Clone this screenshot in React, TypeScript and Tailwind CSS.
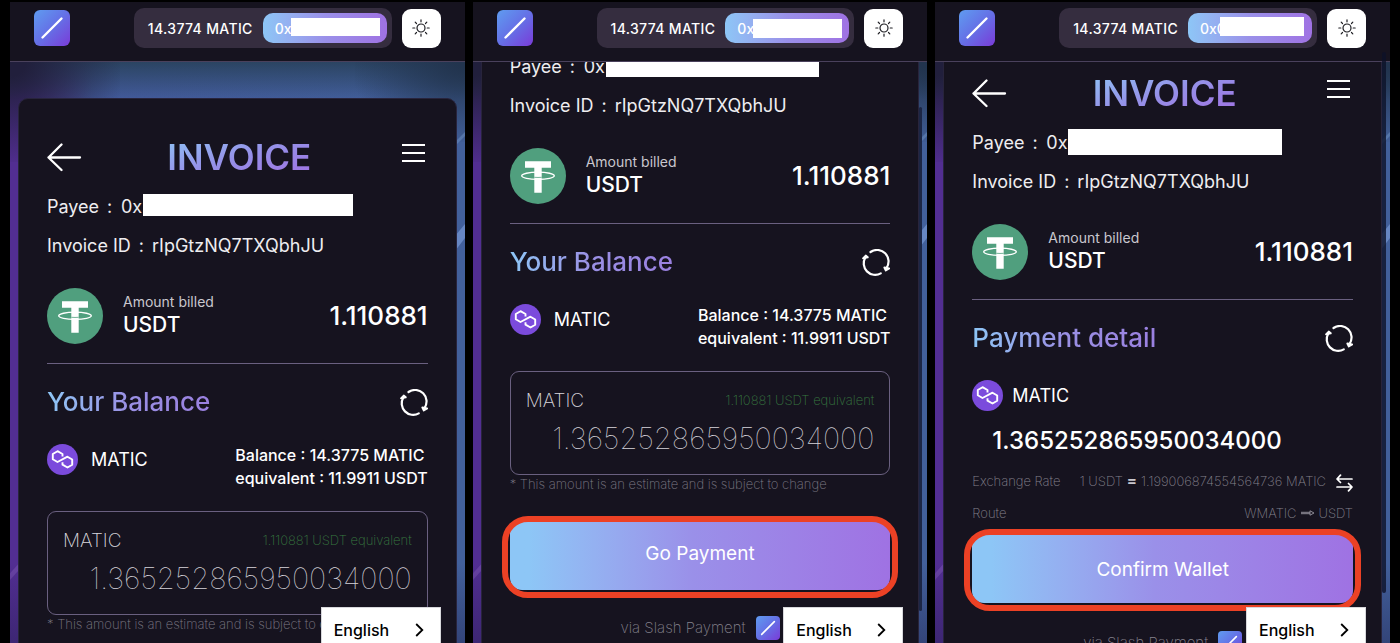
import React from "react";

function SlashLogo({ className }: { className: string }) {
  return (
    <svg viewBox="0 0 36 36" className={className} role="img" aria-label="Slash">
      <defs>
        <linearGradient id="slash-fill" x1="0" y1="0" x2="1" y2="1">
          <stop offset="0" stopColor="#5f9cf0" />
          <stop offset="0.5" stopColor="#6570e6" />
          <stop offset="1" stopColor="#7a3bd8" />
        </linearGradient>
      </defs>
      <rect width="36" height="36" rx="6" fill="url(#slash-fill)" />
      <path d="M8.500 27.500 27.500 8.500" stroke="#fff" strokeWidth="2.400" strokeLinecap="round" />
    </svg>
  );
}

function SunIcon() {
  return (
    <svg viewBox="0 0 18 18" className="size-[18px]" fill="none" stroke="#1f1f24" strokeWidth="1.200" strokeLinecap="round" aria-hidden="true">
      <circle cx="9" cy="9" r="4" />
      <path d="M9 .8v2M9 15.200v2M.8 9h2M15.200 9h2M3.200 3.200l1.300 1.300M13.500 13.500l1.300 1.300M3.200 14.800l1.300-1.300M13.500 4.500l1.300-1.300" />
    </svg>
  );
}

function TetherIcon() {
  return (
    <svg viewBox="0 0 56 56" className="size-14 shrink-0" aria-hidden="true">
      <circle cx="28" cy="28" r="28" fill="#509f7e" />
      <path d="M15 13.300h26v6.500h-9.300v25h-7.400v-25H15z" fill="#fff" />
      <ellipse cx="28" cy="27.800" rx="16.300" ry="3.600" fill="none" stroke="#fff" strokeWidth="1.300" />
      <path d="M24.300 29.300q3.700.300 7.400 0" fill="none" stroke="#509f7e" strokeWidth=".8" />
    </svg>
  );
}

function PolygonIcon() {
  return (
    <svg viewBox="0 0 31 31" className="size-[31px] shrink-0" aria-hidden="true">
      <circle cx="15.500" cy="15.500" r="15.500" fill="#7b4bdc" />
      <path
        d="M15.500 12.500V10l-5-2.800-4.700 2.800v5.200l4.700 2.800 10-5.300 4.700 2.800v5.200l-4.700 2.800-5-2.800v-2.500"
        fill="none"
        stroke="#fff"
        strokeWidth="1.900"
        strokeLinejoin="round"
      />
    </svg>
  );
}

function RefreshIcon() {
  return (
    <svg viewBox="0 0 28 28" className="h-7 w-7" fill="none" stroke="#fff" strokeWidth="2.200" strokeLinecap="round" strokeLinejoin="round" aria-hidden="true">
      <path d="M8.500 3A11.500 11.500 0 0 1 24.500 19" />
      <path d="M3.300 8.500A11.500 11.500 0 0 0 18.800 24.400" />
      <path d="M1 9.300 3.700 6.500 5.800 8.300zM22.300 18.500l1.500 3 3.400-2z" fill="#fff" strokeWidth="1.800" />
    </svg>
  );
}

function SwapIcon() {
  return (
    <svg viewBox="0 0 17 20" className="h-5 w-[17px]" fill="none" stroke="#fff" strokeWidth="1.700" strokeLinecap="round" strokeLinejoin="round" aria-hidden="true">
      <path d="M16 6H1.200M4.500 2.200 1 6l3.500 3.500M1 14h14.800M12.500 10.500l3.500 3.500-3.500 3.800" />
    </svg>
  );
}

function RouteArrow() {
  return (
    <svg viewBox="0 0 14 6" className="mx-1 h-[6px] w-[14px]" fill="none" stroke="#8d8a95" strokeWidth="1" aria-hidden="true">
      <path d="M0 2.300h9M0 3.700h9M9 .800 13 3 9 5.200z" />
    </svg>
  );
}

function Header({ mask, address }: { mask: string; address: string }) {
  return (
    <header className="relative z-10 flex h-[60px] shrink-0 items-center border-b border-[#4a415c] bg-[#16131f] px-6 pb-[7px]">
      <a href="#home" aria-label="Home">
        <SlashLogo className="size-9" />
      </a>
      <div className="ml-auto flex h-10 items-center rounded-[10px] bg-[#352d3f] pl-[14px] pr-[5px]">
        <span className="text-[14px] font-medium tracking-wide text-white">14.3774 MATIC</span>
        <button type="button" className="relative ml-[10px] h-[30px] w-[124px] rounded-[10px] bg-linear-to-r from-[#8dc6f6] via-[#9a90e9] to-[#9f72e3] pl-3 text-left text-[14px] font-medium text-white">
          {address}
          <span className={mask} />
        </button>
      </div>
      <button type="button" aria-label="Light mode" className="ml-[10px] grid size-[39px] place-items-center rounded-[9px] bg-white">
        <SunIcon />
      </button>
    </header>
  );
}

function Backdrop() {
  return (
    <div className="absolute inset-0 bg-linear-to-r from-[#522e92] from-3% via-[#435a9c] via-18% to-[#42609b]">
      <div className="absolute inset-x-0 top-[60px] h-[38px] bg-linear-to-b from-[#2b4462] to-transparent" />
      <div className="absolute top-[60px] left-0 h-[100px] w-[110px] bg-[radial-gradient(ellipse_at_0%_0%,#211f3c_10%,transparent_75%)]" />
      <div className="absolute top-[60px] right-0 h-[80px] w-[110px] bg-[radial-gradient(ellipse_at_100%_0%,#22344e_5%,transparent_75%)]" />
      <svg viewBox="0 0 10 30" className="absolute left-0 top-[558px] h-[20px] w-[9px]" preserveAspectRatio="none" aria-hidden="true">
        <path d="M0 20 10 5v10L0 30z" fill="#7d55b4" opacity=".5" />
      </svg>
      <svg viewBox="0 0 10 120" className="absolute right-0 top-[130px] h-[120px] w-[10px]" preserveAspectRatio="none" aria-hidden="true">
        <path d="M0 10 10 0v4L0 14z" fill="#7ba0cf" opacity=".4" />
        <path d="M0 104 10 92v14L0 119z" fill="#7fa0dc" opacity=".6" />
      </svg>
      <div className="absolute inset-x-0 bottom-0 h-20 bg-linear-to-b from-transparent to-[#1d1b45]/40" />
    </div>
  );
}

function Invoice({ payeeMask }: { payeeMask: string }) {
  return (
    <>
      <div className="flex h-11 items-center justify-between">
        <button type="button" aria-label="Back" className="w-9">
          <svg viewBox="0 0 36 30" className="h-[30px] w-9" fill="none" stroke="#fff" strokeWidth="2.300" strokeLinecap="round" strokeLinejoin="round" aria-hidden="true">
            <path d="M14.500 2.500 1.500 15.500l13 12.500M1.500 15.500H33" />
          </svg>
        </button>
        <h1 className="bg-linear-to-br from-[#8dc6f6] via-[#9590e8] to-[#a070e2] bg-clip-text text-[35px] leading-[44px] font-semibold text-transparent">
          INVOICE
        </h1>
        <button type="button" aria-label="Menu" className="flex h-8 w-8 flex-col items-end gap-[6px] pt-[3px] pr-[3px]">
          <span className="h-[2px] w-[23px] bg-white" />
          <span className="h-[2px] w-[23px] bg-white" />
          <span className="h-[2px] w-[23px] bg-white" />
        </button>
      </div>
      <dl className="mt-2 text-[18px] leading-[39px] text-[#eeedf0]">
        <div className="relative flex">
          <dt className="w-[74px]">
            Payee<span className="ml-2">:</span>
          </dt>
          <dd>0x</dd>
          <span className={payeeMask} />
        </div>
        <div className="flex gap-2">
          <dt>
            Invoice ID<span className="ml-2">:</span>
          </dt>
          <dd>rIpGtzNQ7TXQbhJU</dd>
        </div>
      </dl>
      <div className="mt-[23px] flex h-14 items-center">
        <TetherIcon />
        <div className="ml-5 pb-[2px]">
          <p className="text-[14px] leading-5 text-[#c9c7ce]">Amount billed</p>
          <p className="text-[21px] leading-[26px] font-medium text-white">USDT</p>
        </div>
        <p className="ml-auto pb-[2px] text-[26px] font-medium text-white">1.110881</p>
      </div>
      <hr className="mt-[19px] border-[#6a6080]" />
    </>
  );
}

function SectionTitle({ children }: { children: React.ReactNode }) {
  return (
    <div className="mt-5 flex h-9 items-center justify-between">
      <h2 className="bg-linear-to-r from-[#8dc6f6] via-[#9a90e4] to-[#9a80e0] bg-clip-text text-[26px] leading-9 font-medium text-transparent">
        {children}
      </h2>
      <button type="button" aria-label="Refresh" className="pt-[2px]">
        <RefreshIcon />
      </button>
    </div>
  );
}

function Balance({ id }: { id: string }) {
  return (
    <>
      <SectionTitle>Your Balance</SectionTitle>
      <div className="mt-6 flex h-[47px] items-start">
        <PolygonIcon />
        <span className="ml-[13px] text-[18px] leading-[31px] text-white">MATIC</span>
        <p className="ml-auto text-[16px] leading-[23px] font-medium whitespace-nowrap text-white">
          Balance : 14.3775 MATIC
          <br />
          equivalent : 11.9911 USDT
        </p>
      </div>
      <div className="mt-5 h-[104px] rounded-[9px] border border-[#6a6080] px-[15px] pt-[14px]">
        <div className="flex h-[30px] items-center justify-between">
          <label htmlFor={id} className="text-[19px] font-extralight text-[#d9d7dd]">
            MATIC
          </label>
          <span className="text-[13px] font-extralight text-[#36783f]">1.110881 USDT equivalent</span>
        </div>
        <input
          id={id}
          defaultValue="1.365252865950034000"
          className="h-11 w-full bg-transparent text-right text-[29px] font-thin text-[#d6d4da] outline-none"
        />
      </div>
      <p className="text-[13px] leading-[18px] font-extralight whitespace-nowrap text-[#7d7a85]">* This amount is an estimate and is subject to change</p>
    </>
  );
}

function PaymentDetail() {
  return (
    <>
      <SectionTitle>Payment detail</SectionTitle>
      <div className="mt-6 flex items-center gap-[9px]">
        <PolygonIcon />
        <span className="text-[18px] leading-[31px] text-white">MATIC</span>
      </div>
      <p className="mt-3 ml-5 text-[24px] leading-9 font-medium text-white">1.365252865950034000</p>
      <dl className="mt-[6px] text-[13px] leading-8 font-extralight text-[#85828d]">
        <div className="flex items-center justify-between">
          <dt>Exchange Rate</dt>
          <dd className="flex items-center whitespace-nowrap">
            1 USDT <b className="mx-[4px] text-[15px] font-bold text-[#c9c7ce]">=</b> 1.199006874554564736 MATIC
            <button type="button" aria-label="Swap rate" className="ml-[10px] pt-1">
              <SwapIcon />
            </button>
          </dd>
        </div>
        <div className="flex items-center justify-between">
          <dt>Route</dt>
          <dd className="flex items-center">
            WMATIC <RouteArrow /> USDT
          </dd>
        </div>
      </dl>
    </>
  );
}

function Action({ label, className, inset }: { label: string; className: string; inset: string }) {
  return (
    <div className={className}>
      <button
        type="button"
        className={`h-[70px] w-full rounded-[12px] bg-linear-to-r from-[#8dc6f6] from-5% via-[#9a90e9] via-48% to-[#9f72e3] text-[19px] text-white ${inset}`}
      >
        {label}
      </button>
      <span className="pointer-events-none absolute -inset-x-2 -top-1 -bottom-2 rounded-[26px] border-6 border-[#ec4125]" />
    </div>
  );
}

function Footer() {
  return (
    <footer className="mt-[26px] flex h-6 items-center justify-center gap-[10px] text-[15px] font-extralight text-[#85828d]">
      via Slash Payment
      <SlashLogo className="size-6" />
    </footer>
  );
}

type ScreenProps = {
  mask: string;
  address?: string;
  scroll: string;
  thumb?: string;
  children: React.ReactNode;
};

function Screen({ mask, address = "0x", scroll, thumb, children }: ScreenProps) {
  return (
    <section className="relative flex min-w-0 flex-1 flex-col overflow-hidden bg-[#16131f]">
      <Backdrop />
      <Header mask={mask} address={address} />
      <main className="relative min-h-0 flex-1 overflow-hidden px-2">
        <div className={scroll}>
          <div className="min-h-[900px] rounded-t-[10px] border border-[#28243c] bg-[#16131f] px-7 pt-9">{children}</div>
        </div>
      </main>
      {thumb && <span className={thumb} />}
      <button type="button" className="absolute right-6 bottom-0 z-20 flex h-9 w-[120px] items-center justify-between border border-b-0 border-[#d8d8dc] bg-white pt-[8px] pr-4 pl-3 text-[16px] font-medium text-black">
        English
        <svg viewBox="0 0 9 14" className="h-[14px] w-[9px]" fill="none" stroke="#000" strokeWidth="1.800" aria-hidden="true">
          <path d="M1.200 1 7.300 7l-6.100 6" />
        </svg>
      </button>
    </section>
  );
}

export default function App() {
  return (
    <div className="flex h-screen gap-2 bg-black px-[10px] pt-[2px] font-['Inter',sans-serif]">
      <Screen mask="absolute left-7 top-[5px] h-[18px] w-[89px] bg-white" scroll="pt-9">
        <Invoice payeeMask="absolute left-[96px] top-[7px] h-[22px] w-[210px] bg-white" />
        <Balance id="pay-amount-1" />
      </Screen>
      <Screen
        mask="absolute left-7 top-[6px] h-[19px] w-[89px] bg-white"
        scroll="-mt-[104px]"
        thumb="absolute right-[5px] top-[105px] z-10 h-[504px] w-[3px] rounded-full bg-[#1c2645]"
      >
        <Invoice payeeMask="absolute left-[96px] top-[5px] h-[25px] w-[213px] bg-white" />
        <Balance id="pay-amount-2" />
        <Action label="Go Payment" className="relative mt-[27px]" inset="pb-[2px]" />
        <Footer />
      </Screen>
      <Screen
        mask="absolute left-8 top-1 h-[19px] w-[84px] bg-white"
        address="0x0"
        scroll="-mt-7"
        thumb="absolute right-[4px] top-[50px] z-10 h-[541px] w-1 rounded-full bg-[#0d1228]/80"
      >
        <Invoice payeeMask="absolute left-[96px] top-[6px] h-[26px] w-[214px] bg-white" />
        <PaymentDetail />
        <Action label="Confirm Wallet" className="relative mt-1 mb-7" inset="pt-1" />
        <Footer />
      </Screen>
    </div>
  );
}
